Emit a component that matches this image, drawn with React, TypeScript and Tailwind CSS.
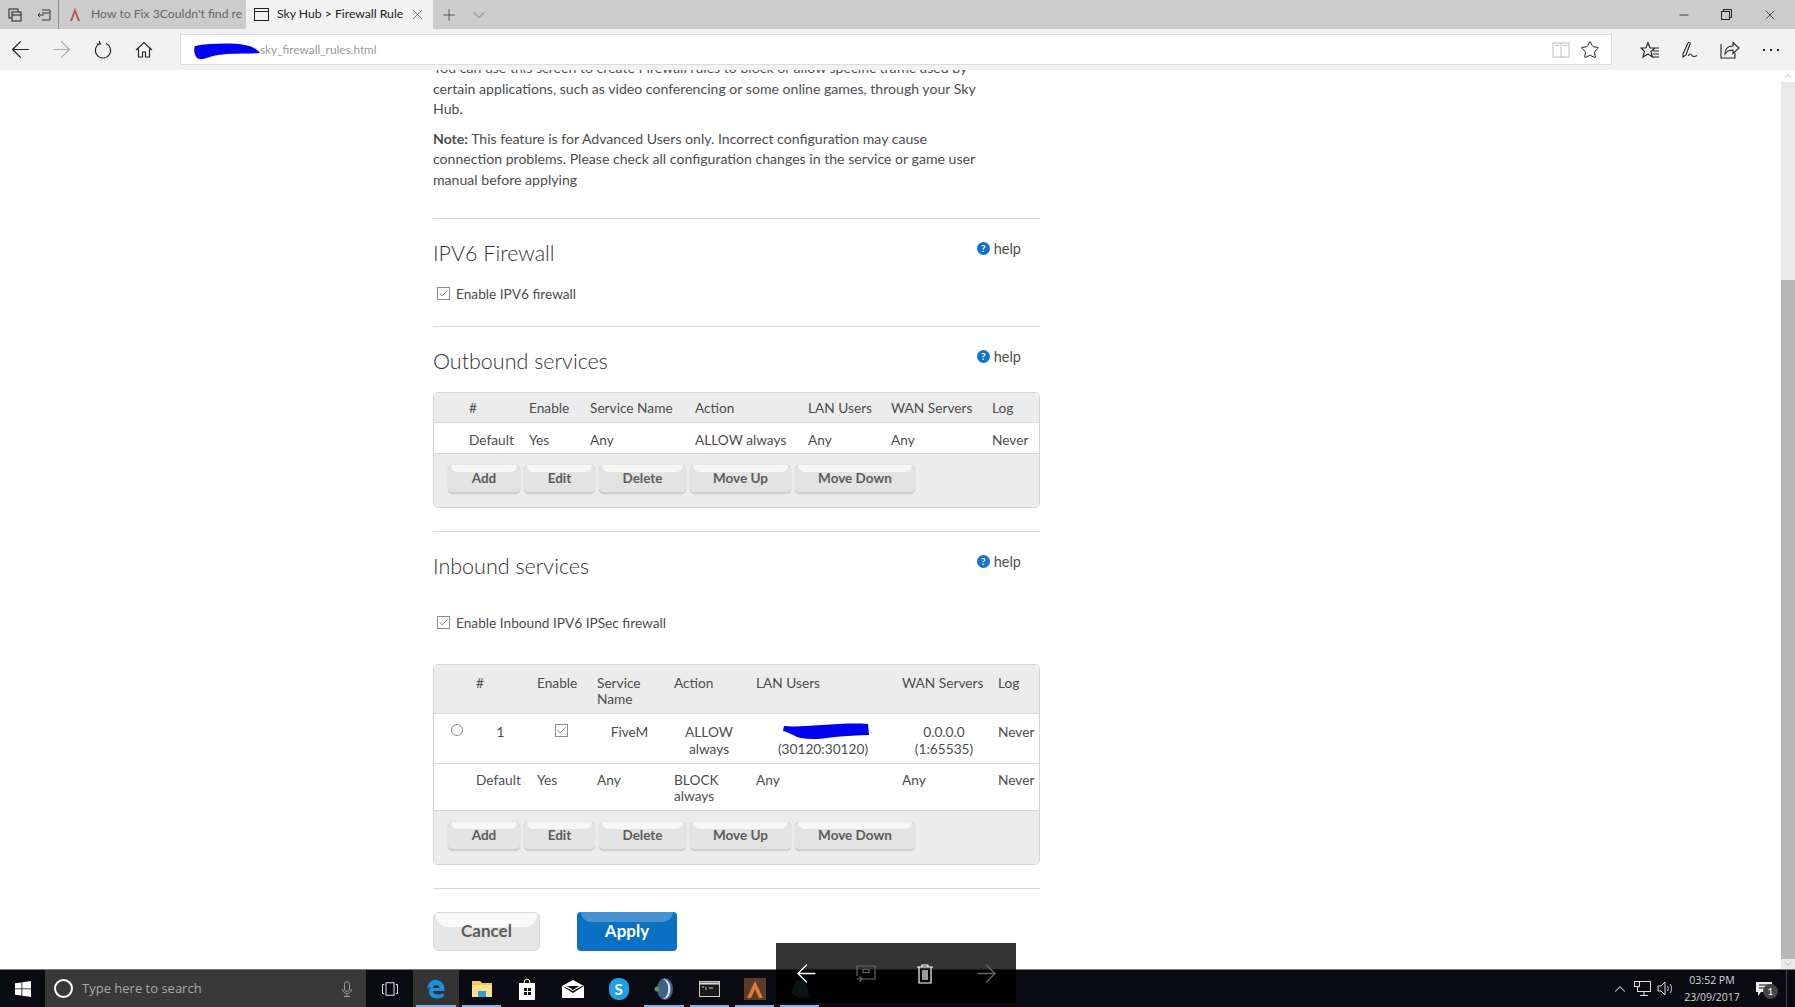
import React from 'react';
import { ArrowLeft, ArrowRight, X, Plus, ChevronDown, ChevronUp, Minus, Star, Check } from 'lucide-react';

const OUT_COLS = 'grid grid-cols-[29px_60px_61px_105px_113px_83px_101px_53px]';
const IN_COLS = 'grid grid-cols-[36px_61px_60px_77px_82px_146px_96px_47px]';

function HelpLink() {
  return (
    <div className="flex items-center gap-[4px] pr-[19px] pt-[1px] text-[14.5px] leading-[20px] self-start">
      <span className="w-[13px] h-[13px] rounded-full bg-[#0f75c9] text-white text-[10px] leading-[13px] font-bold text-center">?</span>
      help
    </div>
  );
}

function Box({ className = '' }: { className?: string }) {
  return (
    <span className={`w-[13px] h-[13px] border border-[#8c8c8c] bg-white flex items-center justify-center shrink-0 ${className}`}>
      <Check className="w-[11px] h-[11px] text-[#555]" strokeWidth={1.6} />
    </span>
  );
}

function PanelButton({ label, width }: { label: string; width: string }) {
  return (
    <button className={`relative h-[29px] ${width} rounded-[5px] bg-[#e3e3e3] border-b-2 border-[#d0d0d0] shadow-[0_0_1px_#aaa] overflow-hidden text-[13.5px] font-bold text-[#5c5c5c]`}>
      <span className="absolute left-[3px] right-[3px] top-0 h-[7px] bg-[#f7f7f7] rounded-b-[9px]" />
      <span className="relative">{label}</span>
    </button>
  );
}

function ButtonRow() {
  return (
    <div className="flex gap-[4px] px-[14px] pt-[11px] pb-[13px] border-t border-[#d8d8d8] bg-[#ececec]">
      <PanelButton label="Add" width="w-[72px]" />
      <PanelButton label="Edit" width="w-[71px]" />
      <PanelButton label="Delete" width="w-[87px]" />
      <PanelButton label="Move Up" width="w-[101px]" />
      <PanelButton label="Move Down" width="w-[120px]" />
    </div>
  );
}

function OutboundTable() {
  const head = ['', '#', 'Enable', 'Service Name', 'Action', 'LAN Users', 'WAN Servers', 'Log'];
  const row = ['', 'Default', 'Yes', 'Any', 'ALLOW always', 'Any', 'Any', 'Never'];
  return (
    <div className="mt-[16px] border border-[#d4d4d4] rounded-[5px] overflow-hidden text-[13.7px] leading-[16px]">
      <div className={`${OUT_COLS} h-[29px] bg-[#ececec] pt-[7px]`}>
        {head.map((h, i) => <div key={i} className="pl-[6px] whitespace-nowrap">{h}</div>)}
      </div>
      <div className={`${OUT_COLS} h-[31px] bg-white border-t border-[#d8d8d8] pt-[9px]`}>
        {row.map((h, i) => <div key={i} className="pl-[6px] whitespace-nowrap">{h}</div>)}
      </div>
      <ButtonRow />
    </div>
  );
}

function InboundTable() {
  return (
    <div className="mt-[31px] border border-[#d4d4d4] rounded-[5px] overflow-hidden text-[13.7px] leading-[16px]">
      <div className={`${IN_COLS} h-[48px] bg-[#ececec] pt-[10px]`}>
        <div />
        <div className="pl-[6px]">#</div>
        <div className="pl-[6px]">Enable</div>
        <div className="pl-[6px]">Service<br />Name</div>
        <div className="pl-[6px]">Action</div>
        <div className="pl-[6px]">LAN Users</div>
        <div className="pl-[6px] whitespace-nowrap">WAN Servers</div>
        <div className="pl-[6px]">Log</div>
      </div>
      <div className={`${IN_COLS} h-[50px] bg-white border-t border-[#d8d8d8] pt-[9px] leading-[17px]`}>
        <div className="pl-[17px] pt-[1px]"><span className="block w-[12px] h-[12px] rounded-full border border-[#888]" /></div>
        <div className="text-center">1</div>
        <div className="flex justify-center pt-[1px]"><Box /></div>
        <div className="text-center">FiveM</div>
        <div className="text-center">ALLOW<br />always</div>
        <div className="text-center relative">
          <svg className="absolute left-[33px] top-[0px]" width="86" height="17" viewBox="0 0 86 17"><path d="M1 3c10 1 22 0 38-1 15-1 32-2 46-1l1 11c-12 0-22 1-34 2-14 2-24 3-34 1C12 14 6 9 0 8z" fill="#0000f0" /></svg>
          <br />(30120:30120)
        </div>
        <div className="text-center">0.0.0.0<br />(1:65535)</div>
        <div className="pl-[6px]">Never</div>
      </div>
      <div className={`${IN_COLS} h-[47px] bg-white border-t border-[#d8d8d8] pt-[8px]`}>
        <div />
        <div className="pl-[6px]">Default</div>
        <div className="pl-[6px]">Yes</div>
        <div className="pl-[6px]">Any</div>
        <div className="pl-[6px]">BLOCK<br />always</div>
        <div className="pl-[6px]">Any</div>
        <div className="pl-[6px]">Any</div>
        <div className="pl-[6px]">Never</div>
      </div>
      <ButtonRow />
    </div>
  );
}

function Rule({ className = '' }: { className?: string }) {
  return <div className={`h-px bg-[#d9d9d9] ${className}`} />;
}

function Heading({ title, className = '' }: { title: string; className?: string }) {
  return (
    <div className={`flex justify-between ${className}`}>
      <h2 className="text-[21.5px] leading-[30px] text-[#333] font-light">{title}</h2>
      <HelpLink />
    </div>
  );
}

function TabStrip() {
  return (
    <div className="h-[29px] bg-[#cccccc] flex items-center shrink-0 text-[12.2px] text-[#222]">
      <div className="w-[30px] flex justify-center">
        <svg width="14" height="14" viewBox="0 0 14 14" fill="none" stroke="#222" strokeWidth="1"><rect x="1" y="1" width="9" height="9" /><rect x="4" y="4" width="9" height="9" fill="#ccc" /><path d="M4 7h9" /></svg>
      </div>
      <div className="w-[29px] flex justify-center border-r border-[#8d8d8d] h-full items-center">
        <svg width="14" height="12" viewBox="0 0 14 12" fill="none" stroke="#333" strokeWidth="1"><path d="M5 1h8v10H5M7 6H1M3 4 1 6l2 2M5 4h8" /></svg>
      </div>
      <div className="w-[187px] h-full flex items-center">
        <div className="w-[32px] flex justify-center shrink-0">
          <svg width="12" height="15" viewBox="0 0 12 15"><path d="M6 1 1 14h2L6 6l3 8h2z" fill="#b5553a" /></svg>
        </div>
        <span className="whitespace-nowrap text-[#666]">How to Fix 3Couldn't find re</span>
      </div>
      <div className="w-[187px] h-full bg-[#f2f2f2] flex items-center">
        <div className="w-[31px] flex justify-center shrink-0">
          <svg width="15" height="13" viewBox="0 0 15 13" fill="none" stroke="#222" strokeWidth="1"><rect x="0.5" y="0.5" width="14" height="12" /><path d="M1 3.5h13" /></svg>
        </div>
        <span className="whitespace-nowrap">Sky Hub &gt; Firewall Rule</span>
        <X className="w-[17px] h-[17px] ml-[6px] text-[#444]" strokeWidth={1} />
      </div>
      <div className="w-[31px] flex justify-center"><Plus className="w-[18px] h-[18px] text-[#333]" strokeWidth={1} /></div>
      <div className="w-[29px] flex justify-center"><ChevronDown className="w-[20px] h-[20px] text-[#666]" strokeWidth={1} /></div>
      <div className="ml-auto flex items-center pr-[4px]">
        <div className="w-[43px] flex justify-center"><Minus className="w-[14px] h-[14px] text-[#111]" strokeWidth={1.3} /></div>
        <div className="w-[43px] flex justify-center">
          <svg width="11" height="11" viewBox="0 0 11 11" fill="none" stroke="#222" strokeWidth="1"><rect x="0.5" y="2.5" width="8" height="8" /><path d="M2.5 2.500v-2h8v8h-2" /></svg>
        </div>
        <div className="w-[43px] flex justify-center"><X className="w-[16px] h-[16px] text-[#222]" strokeWidth={1.1} /></div>
      </div>
    </div>
  );
}

function NavBar() {
  return (
    <div className="h-[41px] bg-[#f2f2f2] flex items-center shrink-0">
      <div className="w-[41px] flex justify-center"><ArrowLeft className="w-[27px] h-[27px] text-[#222]" strokeWidth={1.1} /></div>
      <div className="w-[41px] flex justify-center"><ArrowRight className="w-[27px] h-[27px] text-[#aaa]" strokeWidth={1.1} /></div>
      <div className="w-[41px] flex justify-center">
        <svg width="18" height="19" viewBox="0 0 18 19" fill="none" stroke="#222" strokeWidth="1.1"><path d="M6 3.400a7.600 7.600 0 1 0 6 0M5 1l1.500 3H2.800" /></svg>
      </div>
      <div className="w-[41px] flex justify-center">
        <svg width="18" height="17" viewBox="0 0 18 17" fill="none" stroke="#222" strokeWidth="1.1"><path d="M1 9 9 1.500 17 9M3.500 7.500V16h4v-5h3v5h4V7.500" /></svg>
      </div>
      <div className="ml-[16px] w-[1432px] h-[31px] bg-white border border-[#dcdcdc] flex items-center relative text-[11.8px] text-[#9a9a9a]">
        <svg className="absolute left-[12px] top-[8px]" width="67" height="18" viewBox="0 0 67 18"><path d="M2 3C18 0 40 0 52 2c6 1 12 4 15 8-10 1-30 0-42 2-8 1-14 5-19 4C2 14 0 8 2 3z" fill="#0000f0" /></svg>
        <span className="pl-[79px]">sky_firewall_rules.html</span>
        <div className="ml-auto flex items-center">
          <svg width="18" height="16" viewBox="0 0 18 16" fill="none" stroke="#bdbdbd" strokeWidth="1"><rect x="1" y="1" width="16" height="14" /><path d="M9 1v14M3 3.500h4M11 3.500h4" /></svg>
          <Star className="w-[20px] h-[20px] ml-[10px] mr-[11px] text-[#222]" strokeWidth={1.2} />
        </div>
      </div>
      <div className="ml-[18px] w-[40px] flex justify-center">
        <svg width="20" height="18" viewBox="0 0 20 18" fill="none" stroke="#222" strokeWidth="1.1"><path d="M8 1.500 10 7h5l-4 3.500L12.500 16 8 13l-5 3 1.500-5.500L1 7h5zM13 10h6M13 13h6M13 16h6M15 7h4" /></svg>
      </div>
      <div className="w-[40px] flex justify-center">
        <svg width="18" height="18" viewBox="0 0 18 18" fill="none" stroke="#222" strokeWidth="1.1"><path d="M2 13 7 2c1-1.500 2.500-.500 2 1L5 14l-3 2zM7 15c2-3 3-2 4-.500s2 1.500 5 0" /></svg>
      </div>
      <div className="w-[40px] flex justify-center">
        <svg width="20" height="18" viewBox="0 0 20 18" fill="none" stroke="#222" strokeWidth="1.1"><path d="M1 3v14h14v-5M5 13c0-5 3-8 8-8V1.500L19 7l-6 5.500V9c-4 0-6 1-8 4z" /></svg>
      </div>
      <div className="w-[42px] flex justify-center gap-[5px]">
        <span className="w-[2px] h-[2px] bg-[#222]" /><span className="w-[2px] h-[2px] bg-[#222]" /><span className="w-[2px] h-[2px] bg-[#222]" />
      </div>
    </div>
  );
}

function Scrollbar() {
  return (
    <div className="w-[14px] bg-[#e9e9e9] flex flex-col shrink-0">
      <div className="h-[12px] bg-white flex items-center justify-center"><ChevronUp className="w-[10px] h-[10px] text-[#aaa]" /></div>
      <div className="h-[198px]" />
      <div className="flex-1 bg-[#b7b7b7]" />
      <div className="h-[10px] bg-[#e9e9e9] flex items-center justify-center"><ChevronDown className="w-[10px] h-[10px] text-[#aaa]" /></div>
    </div>
  );
}

function TaskIcon({ children, active, bar, width = 'w-[46px]' }: { children: React.ReactNode; active?: boolean; bar?: boolean; width?: string }) {
  return (
    <div className={`relative h-full ${width} flex items-center justify-center ${active ? 'bg-[#333333]' : ''}`}>
      {children}
      {bar && <span className="absolute left-[3px] right-[3px] bottom-0 h-[2px] bg-[#76b9ed]" />}
    </div>
  );
}

function Taskbar() {
  return (
    <div className="h-[38px] bg-[#0a0a12] border-t border-[#777] flex items-center shrink-0 text-[#ddd]">
      <div className="w-[45px] flex justify-center">
        <svg width="16" height="16" viewBox="0 0 16 16" fill="#fff"><path d="M0 2.300 6.500 1.400v6.100H0zM7.300 1.300 16 0v7.500H7.300zM0 8.300h6.500v6.200L0 13.700zM7.300 8.300H16V16l-8.700-1.300z" /></svg>
      </div>
      <div className="w-[321px] h-full bg-[#383838] flex items-center text-[13px] text-[#a8a8a8]">
        <span className="w-[19px] h-[19px] ml-[9px] rounded-full border-[2.5px] border-white shrink-0" />
        <span className="ml-[9px]" style={{ fontFamily: '"Open Sans", sans-serif' }}>Type here to search</span>
        <svg className="ml-auto mr-[13px]" width="12" height="16" viewBox="0 0 12 16" fill="none" stroke="#999" strokeWidth="1"><rect x="3.500" y="0.500" width="5" height="10" rx="2.500" /><path d="M1.500 8c0 6 9 6 9 0M6 13v2M3 15.500h6" /></svg>
      </div>
      <TaskIcon width="w-[47px]">
        <svg width="16" height="14" viewBox="0 0 18 15" fill="none" stroke="#fff" strokeWidth="1"><rect x="4.500" y="0.500" width="9" height="14" /><path d="M2.500 2.500h-2v10h2M15.500 2.500h2v10h-2" /></svg>
      </TaskIcon>
      <TaskIcon active bar>
        <svg width="20" height="20" viewBox="0 0 20 20"><path d="M1 10C2 3 7 0 11 1c5 1 8 5 7.500 11H7c.300 4 6 4.500 10.500 2v4c-5 2.500-13 2-14.500-4-.500-2 0-4 1.500-6C3.500 8 2 9 1 10zm6-1h6.500C13.500 5 7.500 5 7 9z" fill="#1a8fe0" /></svg>
      </TaskIcon>
      <TaskIcon bar width="w-[45px]">
        <svg width="20" height="18" viewBox="0 0 20 18"><path d="M0 1h8l2 2h10v14H0z" fill="#f2c95c" /><rect x="0" y="5" width="20" height="12" fill="#fbe08a" /><rect x="6" y="11" width="8" height="6" fill="#2f9fd8" /></svg>
      </TaskIcon>
      <TaskIcon>
        <svg width="18" height="22" viewBox="0 0 18 22"><path d="M6 5a3 4 0 0 1 6 0" fill="none" stroke="#fff" strokeWidth="1" /><rect x="1" y="5" width="16" height="17" fill="#fff" /><path d="M6 10h3v3H6zM10 10h3v3h-3zM6 14h3v3H6zM10 14h3v3h-3z" fill="#111" /></svg>
      </TaskIcon>
      <TaskIcon>
        <svg width="22" height="18" viewBox="0 0 22 18"><path d="M0 6 11 0l11 6v12H0z" fill="#fff" /><path d="M0 6l11 7 11-7-2 0-9 5-4-2z" fill="#111" /><path d="M5 6h12l-6 4z" fill="#111" /></svg>
      </TaskIcon>
      <TaskIcon width="w-[45px]">
        <span className="w-[20px] h-[22px] rounded-[9px] bg-[#1ea0e6] text-white font-bold text-[15px] leading-[22px] text-center">S</span>
      </TaskIcon>
      <TaskIcon bar>
        <svg width="20" height="24" viewBox="0 0 20 24"><ellipse cx="11" cy="12" rx="8" ry="11" fill="#3f5f85" /><path d="M9 2c7 3 7 17 0 20 10 0 10-20 0-20z" fill="#dfe7ee" /><circle cx="3" cy="12" r="2.500" fill="#4d9c55" /></svg>
      </TaskIcon>
      <TaskIcon bar width="w-[45px]">
        <svg width="21" height="16" viewBox="0 0 21 16" fill="none" stroke="#ccc" strokeWidth="1"><rect x="0.500" y="0.500" width="20" height="15" fill="#1a1a1a" /><path d="M1 2.500h19" stroke="#ddd" strokeWidth="2" /><path d="M3 6h2M7 6v3M10 7h4" /></svg>
      </TaskIcon>
      <TaskIcon bar width="w-[45px]">
        <div className="w-[22px] h-[22px] bg-[#5a3a28] flex items-center justify-center">
          <svg width="18" height="20" viewBox="0 0 18 20"><path d="M9 2 1 19h4l4-9 4 9h4z" fill="#e07b35" /></svg>
        </div>
      </TaskIcon>
      <TaskIcon bar width="w-[45px]">
        <svg width="20" height="20" viewBox="0 0 20 20"><path d="M7 1 16 3l3 15-9 1-9-5z" fill="#3d6270" /></svg>
      </TaskIcon>
      <div className="ml-auto h-full flex items-center">
        <ChevronUp className="w-[18px] h-[18px] text-[#ddd]" strokeWidth={1.4} />
        <svg className="ml-[5px]" width="17" height="15" viewBox="0 0 17 15" fill="none" stroke="#ddd" strokeWidth="1"><rect x="3.500" y="0.500" width="13" height="10" /><path d="M10 11v3M6 14.500h8" /><rect x="0.500" y="0.500" width="5" height="5" fill="#111" /></svg>
        <svg className="ml-[6px]" width="17" height="15" viewBox="0 0 17 15" fill="none" stroke="#ddd" strokeWidth="1"><path d="M1 5h3l4-4v13l-4-4H1zM10.500 5c1 1.500 1 3.500 0 5M13 3c2 2.500 2 6.500 0 9" /></svg>
        <div className="w-[60px] ml-[8px] text-center text-[10.5px] leading-[17px] text-[#d8d8d8]" style={{ fontFamily: '"Open Sans", sans-serif' }}>
          03:52 PM<br />23/09/2017
        </div>
        <div className="relative w-[44px] flex justify-center">
          <svg width="16" height="14" viewBox="0 0 16 14"><path d="M0 0h16v10H5l-3 4v-4H0z" fill="#eee" /><path d="M3 3h10M3 6h10" stroke="#111" strokeWidth="1" /></svg>
          <span className="absolute left-[21px] top-[2px] w-[15px] h-[15px] rounded-full bg-[#444] text-white text-[10px] leading-[15px] text-center">1</span>
        </div>
        <div className="w-[1px] h-full bg-[#444]" />
        <div className="w-[8px]" />
      </div>
    </div>
  );
}

function SnipBar() {
  return (
    <div className="absolute left-[776px] top-[943px] w-[240px] h-[60px] bg-black/80 pt-[16px]">
      <div className="flex items-center pl-[16px]">
        <ArrowLeft className="w-[29px] h-[29px] text-white" strokeWidth={1.1} />
        <svg className="ml-[35px]" width="20" height="18" viewBox="0 0 20 18" fill="none" stroke="#666" strokeWidth="1.2"><path d="M1 11V1h18v13H6M1 14h4M3.500 11.500 6 14l-2.500 2.500M7 4.500h6v3H7z" /></svg>
        <svg className="ml-[41px]" width="16" height="20" viewBox="0 0 16 20" fill="none" stroke="#fff" strokeWidth="1.2"><path d="M0 3h16M5 3V1h6v2M2 3v16h12V3M6 6v10M8 6v10M10 6v10" /></svg>
        <ArrowRight className="w-[29px] h-[29px] ml-[39px] text-[#666]" strokeWidth={1.1} />
      </div>
    </div>
  );
}

export default function App() {
  return (
    <div className="relative h-screen w-full flex flex-col overflow-hidden bg-white font-['Lato',sans-serif] text-[#4d4d4d]">
      <TabStrip />
      <NavBar />
      <div className="flex-1 flex min-h-0">
        <main className="flex-1 overflow-hidden pl-[433px]">
          <div className="w-[607px] -mt-[12px]">
            <div className="text-[14.1px] leading-[20.6px] whitespace-nowrap">
              <p>You can use this screen to create Firewall rules to block or allow specific traffic used by<br />certain applications, such as video conferencing or some online games, through your Sky<br />Hub.</p>
              <p className="mt-[9px]"><b>Note:</b> This feature is for Advanced Users only. Incorrect configuration may cause<br />connection problems. Please check all configuration changes in the service or game user<br />manual before applying</p>
            </div>
            <Rule className="mt-[27px]" />
            <Heading title="IPV6 Firewall" className="mt-[19px]" />
            <label className="mt-[16px] flex items-center gap-[6px] pl-[4px] text-[13.7px] leading-[20px]"><Box />Enable IPV6 firewall</label>
            <Rule className="mt-[22px]" />
            <Heading title="Outbound services" className="mt-[19px]" />
            <OutboundTable />
            <Rule className="mt-[23px]" />
            <Heading title="Inbound services" className="mt-[19px]" />
            <label className="mt-[32px] flex items-center gap-[6px] pl-[4px] text-[13.7px] leading-[20px]"><Box />Enable Inbound IPV6 IPSec firewall</label>
            <InboundTable />
            <Rule className="mt-[23px]" />
            <div className="mt-[23px] flex gap-[37px]">
              <button className="relative w-[107px] h-[39px] rounded-[6px] bg-[#e6e6e6] border border-[#d8d8d8] overflow-hidden text-[17px] font-bold text-[#5c5c5c]">
                <span className="absolute left-[2px] right-[2px] top-0 h-[14px] bg-[#fafafa] rounded-b-[12px]" />
                <span className="relative">Cancel</span>
              </button>
              <button className="relative w-[100px] h-[39px] rounded-[4px] bg-[#0a70c4] overflow-hidden text-[17px] font-bold text-white">
                <span className="absolute left-[4px] right-[4px] top-0 h-[10px] bg-[#4a93d3] rounded-b-[10px]" />
                <span className="relative">Apply</span>
              </button>
            </div>
          </div>
        </main>
        <Scrollbar />
      </div>
      <Taskbar />
      <SnipBar />
    </div>
  );
}
